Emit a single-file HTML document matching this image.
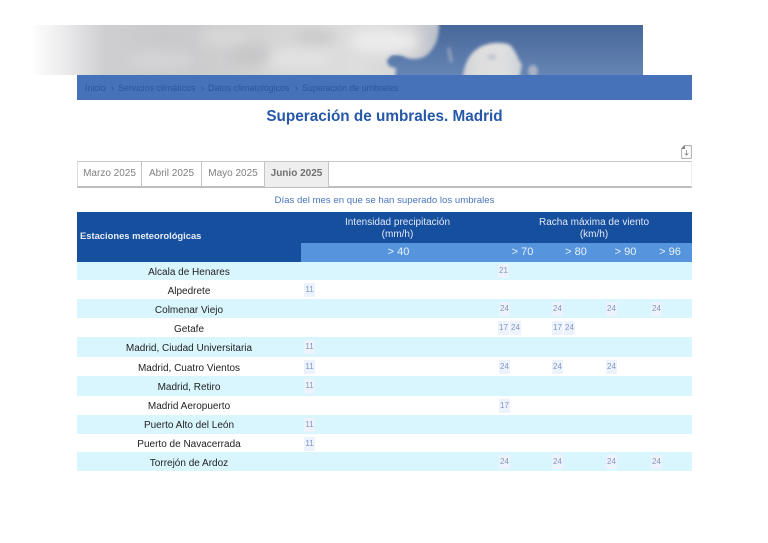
<!DOCTYPE html>
<html lang="es"><head><meta charset="utf-8"><title>Superación de umbrales. Madrid</title>
<style>
html,body{margin:0;padding:0;background:#fff}
body{width:768px;height:543px;position:relative;overflow:hidden;font-family:"Liberation Sans",sans-serif;font-size:10px;color:#222}
#w{position:absolute;left:0;top:0;width:768px;height:543px;filter:blur(.35px)}
.a{position:absolute;white-space:nowrap}
.c{text-align:center}
.bc{position:absolute;top:82px;font-size:8.9px;line-height:12px;color:#2b56a0;white-space:nowrap}
.tab{position:absolute;top:162px;height:25px;line-height:23px;text-align:center;color:#808080;font-size:10px;border-right:1px solid #c4c4c4;box-sizing:border-box}
.row{position:absolute;left:77px;width:615px}
.row.o{background:#d9f6fe}
.st{position:absolute;left:0;width:224px;text-align:center;color:#222;font-size:10px;top:5px;line-height:13px}
.st.u{top:4px}
.d{position:absolute;top:3px;width:11px;height:14px;line-height:14px;text-align:center;font-size:8px;color:#8496c0;background:#ecf3fd}
.hd{position:absolute;color:#dfe8f5;text-align:center;font-size:10px;line-height:12px;white-space:nowrap}
.th{position:absolute;top:243px;height:19px;line-height:19px;text-align:center;color:#e8f1fb;font-size:11px}
</style></head><body><div id="w">

<svg class="a" style="left:30px;top:25px" width="613" height="50" viewBox="0 0 613 50">
<defs>
<linearGradient id="sky" x1="0" y1="0" x2="0" y2="1"><stop offset="0" stop-color="#48679a"/><stop offset="1" stop-color="#6585b4"/></linearGradient>
<linearGradient id="base" gradientUnits="userSpaceOnUse" x1="0" y1="0" x2="410" y2="0"><stop offset="0" stop-color="#fff"/><stop offset=".08" stop-color="#ececee"/><stop offset=".18" stop-color="#cfcfd2"/><stop offset=".33" stop-color="#c9c9cc"/><stop offset=".5" stop-color="#cfcfd0"/><stop offset=".62" stop-color="#d6d6d6"/><stop offset=".8" stop-color="#dedede"/><stop offset=".93" stop-color="#d4d4d6"/><stop offset="1" stop-color="#b8bdc8"/></linearGradient>
<linearGradient id="c2" x1="0" y1="0" x2="1" y2="0"><stop offset="0" stop-color="#d0d2d6"/><stop offset=".3" stop-color="#dedede"/><stop offset=".7" stop-color="#e0e0e0"/><stop offset="1" stop-color="#ccd0d8"/></linearGradient>
<filter id="b" filterUnits="userSpaceOnUse" x="-50" y="-50" width="713" height="150"><feGaussianBlur stdDeviation="1.6"/></filter>
<filter id="b2" filterUnits="userSpaceOnUse" x="-50" y="-50" width="713" height="150"><feGaussianBlur stdDeviation="6"/></filter>
<clipPath id="cl"><path d="M0 0H408V15L397 30L380 34L373 31L362 30L357 36L360 42L366 43L364 50H0Z"/></clipPath>
</defs>
<rect x="330" width="283" height="50" fill="url(#sky)"/>
<path filter="url(#b)" d="M-20 -20H408C410 5 410 18 397 30C390 35 380 35 373 31C366 28 358 30 357 36C357 41 362 43 366 43C366 46 365 50 363 70H-20Z" fill="url(#base)"/>
<g clip-path="url(#cl)"><g filter="url(#b2)">
<ellipse cx="355" cy="16" rx="34" ry="12" fill="#ececec"/>
<ellipse cx="285" cy="12" rx="22" ry="8" fill="#cacacc"/>
<ellipse cx="265" cy="34" rx="38" ry="11" fill="#e2e2e2"/>
<ellipse cx="195" cy="12" rx="24" ry="9" fill="#d8d8d8"/>
<ellipse cx="220" cy="30" rx="22" ry="10" fill="#c6c6c8"/>
<ellipse cx="130" cy="36" rx="34" ry="10" fill="#d4d4d6"/>
</g></g>
<g filter="url(#b)">
<path d="M432 60C433 42 438 30 447 24C455 18 470 16 480 20C486 26 488 34 492 40C491 44 490 50 489 60Z" fill="url(#c2)"/>
<ellipse cx="462" cy="32" rx="5" ry="3" fill="#c4c8d0"/>
<ellipse cx="503" cy="46" rx="5" ry="6" fill="#a8b2c4"/>
<path d="M417 24L420 38L423 37L420 22Z" fill="#8fa2c0"/>
</g>
</svg>

<div class="a" style="left:77px;top:75px;width:615px;height:25px;background:#4572b8"></div>
<div class="bc" style="left:85px">Inicio</div><div class="bc" style="left:111px">›</div>
<div class="bc" style="left:118px">Servicios climáticos</div><div class="bc" style="left:201px">›</div>
<div class="bc" style="left:208px">Datos climatológicos</div><div class="bc" style="left:295px">›</div>
<div class="bc" style="left:302px">Superación de umbrales</div>

<div class="a c" style="left:77px;width:615px;top:107px;font-size:15.3px;line-height:20px;font-weight:bold;color:#2558a8">Superación de umbrales. Madrid</div>

<svg class="a" style="left:681px;top:145px" width="11" height="14" viewBox="0 0 11 14"><path d="M3.5.7H10.3V13.3H.7V3.5Z" fill="#fff" stroke="#999" stroke-width=".8"/><path d="M.7 3.5H3.5V.7" fill="#777" stroke="#777" stroke-width=".8"/><path d="M5.5 5V10M3.7 8.3L5.5 10.2L7.3 8.3" fill="none" stroke="#888" stroke-width=".8"/></svg>

<div class="a" style="left:77px;top:161px;width:615px;height:27px;box-sizing:border-box;border-top:1px solid #c8c8c8;border-bottom:2px solid #bdbdbd;border-left:1px solid #ddd;border-right:1px solid #eee"></div>
<div class="tab" style="left:78px;width:64px">Marzo 2025</div>
<div class="tab" style="left:142px;width:60px">Abril 2025</div>
<div class="tab" style="left:202px;width:63px">Mayo 2025</div>
<div class="tab" style="left:265px;width:64px;background:#eeeeee;color:#707070;font-weight:bold">Junio 2025</div>

<div class="a c" style="left:77px;width:615px;top:195px;font-size:9.65px;line-height:12px;color:#4a76bf">Días del mes en que se han superado los umbrales</div>

<div class="a" style="left:77px;top:212px;width:615px;height:50px;background:#174f9f"></div>
<div class="a" style="left:301px;top:243px;width:391px;height:19px;background:#5695dd"></div>
<div class="a" style="left:80px;top:229px;font-size:9.4px;line-height:13px;font-weight:bold;color:#e6edf7">Estaciones meteorológicas</div>
<div class="hd" style="left:301px;width:193px;top:217px">Intensidad precipitación<br>(mm/h)</div>
<div class="hd" style="left:496px;width:196px;top:217px">Racha máxima de viento<br>(km/h)</div>
<div class="th" style="left:301px;width:195px">&gt; 40</div>
<div class="th" style="left:496px;width:53px">&gt; 70</div>
<div class="th" style="left:549px;width:54px">&gt; 80</div>
<div class="th" style="left:603px;width:45px">&gt; 90</div>
<div class="th" style="left:648px;width:44px">&gt; 96</div>

<div class="row o" style="top:262px;height:18px"><div class="st u">Alcala de Henares</div><div class="d" style="left:421px;top:2px">21</div></div>
<div class="row" style="top:280px;height:19px"><div class="st">Alpedrete</div><div class="d" style="left:227px">11</div></div>
<div class="row o" style="top:299px;height:19px"><div class="st">Colmenar Viejo</div><div class="d" style="left:422px">24</div><div class="d" style="left:475px">24</div><div class="d" style="left:529px">24</div><div class="d" style="left:574px">24</div></div>
<div class="row" style="top:318px;height:19px"><div class="st">Getafe</div><div class="d" style="left:421px">17</div><div class="d" style="left:433px">24</div><div class="d" style="left:475px">17</div><div class="d" style="left:487px">24</div></div>
<div class="row o" style="top:337px;height:20px"><div class="st">Madrid, Ciudad Universitaria</div><div class="d" style="left:227px">11</div></div>
<div class="row" style="top:357px;height:19px"><div class="st">Madrid, Cuatro Vientos</div><div class="d" style="left:227px">11</div><div class="d" style="left:422px">24</div><div class="d" style="left:475px">24</div><div class="d" style="left:529px">24</div></div>
<div class="row o" style="top:376px;height:20px"><div class="st">Madrid, Retiro</div><div class="d" style="left:227px">11</div></div>
<div class="row" style="top:396px;height:19px"><div class="st u">Madrid Aeropuerto</div><div class="d" style="left:422px">17</div></div>
<div class="row o" style="top:415px;height:19px"><div class="st u">Puerto Alto del León</div><div class="d" style="left:227px">11</div></div>
<div class="row" style="top:434px;height:18px"><div class="st u">Puerto de Navacerrada</div><div class="d" style="left:227px">11</div></div>
<div class="row o" style="top:452px;height:19px"><div class="st">Torrejón de Ardoz</div><div class="d" style="left:422px">24</div><div class="d" style="left:475px">24</div><div class="d" style="left:529px">24</div><div class="d" style="left:574px">24</div></div>

</div></body></html>
